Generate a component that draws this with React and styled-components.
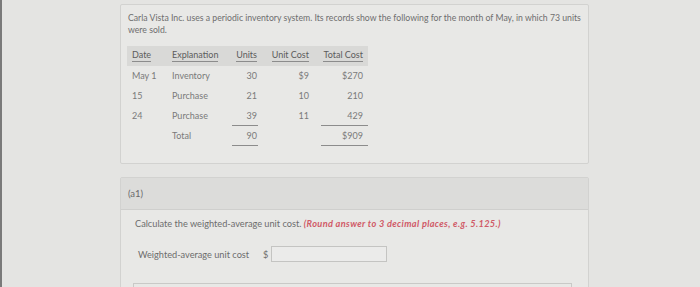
import React from 'react';
import styled, { createGlobalStyle } from 'styled-components';

const GlobalStyle = createGlobalStyle`
  html, body {
    margin: 0;
    padding: 0;
    background: #e4e4e2;
  }
  body {
    font-family: Lato, "Open Sans", "Liberation Sans", sans-serif;
    color: #6f6f6f;
  }
`;

const Page = styled.div`
  height: 287px;
  box-sizing: border-box;
  border-left: 2px solid #7a7a7a;
  padding: 4px 0 0 118px;
  overflow: hidden;
`;

const Card = styled.div`
  width: 469px;
  box-sizing: border-box;
  border: 1px solid #d2d2d0;
  border-radius: 2px;
  background: #e8e8e6;
  margin-bottom: ${p => p.gap || 0}px;
`;

const Intro = styled.p`
  margin: 0;
  padding: 7px 4px 0 7px;
  font-size: 8.7px;
  line-height: 12px;
  color: #6e6e6e;
`;

const Grid = styled.div`
  display: grid;
  grid-template-columns: 45px 59px 28px 53px 56px;
  grid-auto-rows: 20px;
  margin: 10px 0 17px 6px;
  font-size: 9px;
  color: #7a7a7a;
`;

const HeadCell = styled.div`
  background: #d9d9d7;
  color: #5c5c5c;
  display: flex;
  align-items: center;
  justify-content: ${p => (p.right ? 'flex-end' : 'flex-start')};
  padding: 0 ${p => p.pr || 0}px 0 ${p => p.pl || 0}px;
  span {
    border-bottom: 1.5px solid #8c8c8c;
    line-height: 10px;
    padding-bottom: 1px;
  }
`;

const Cell = styled.div`
  display: flex;
  align-items: center;
  justify-content: ${p => (p.right ? 'flex-end' : 'flex-start')};
  padding: 0 ${p => p.pr || 0}px 0 ${p => p.pl || 0}px;
  margin-left: ${p => p.ml || 0}px;
  margin-right: ${p => p.mr || 0}px;
  border-bottom: ${p => (p.rule ? '1.5px solid #8c8c8c' : '1.5px solid transparent')};
`;

const PartHeader = styled.div`
  height: 31px;
  display: flex;
  align-items: center;
  padding-left: 7px;
  background: #dcdcda;
  border-bottom: 1px solid #cfcfcd;
  font-size: 9.5px;
  color: #6a6a6a;
`;

const PartBody = styled.div`
  padding: 8px 16px 0 12px;
  font-size: 9.2px;
  color: #6c6c6c;
`;

const Question = styled.div`
  padding-left: 2px;
  line-height: 12px;
`;

const Note = styled.span`
  color: #d05a66;
  font-weight: bold;
  font-style: italic;
  letter-spacing: 0.35px;
`;

const AnswerRow = styled.div`
  display: flex;
  align-items: center;
  margin-top: 16px;
  padding-left: 5px;
`;

const AnswerLabel = styled.span`
  width: 125px;
`;

const Dollar = styled.span`
  width: 8px;
`;

const Input = styled.div`
  width: 114px;
  height: 14px;
  border: 1px solid #c4c4c2;
  background: #ebebea;
`;

const NextBox = styled.div`
  margin: 21px 0 0 0;
  height: 20px;
  border: 1px solid #c9c9c7;
  border-bottom: none;
`;

const rows = [
  { date: 'May 1', exp: 'Inventory', units: '30', cost: '$9', total: '$270' },
  { date: '15', exp: 'Purchase', units: '21', cost: '10', total: '210' },
  { date: '24', exp: 'Purchase', units: '39', cost: '11', total: '429', rule: true },
  { date: '', exp: 'Total', units: '90', cost: '', total: '$909', rule: true },
];

export default function App() {
  return (
    <>
      <GlobalStyle />
      <Page>
        <Card gap={13}>
          <Intro>
            Carla Vista Inc. uses a periodic inventory system. Its records show the following for the month of May, in which 73 units were sold.
          </Intro>
          <Grid>
            <HeadCell pl={5}><span>Date</span></HeadCell>
            <HeadCell><span>Explanation</span></HeadCell>
            <HeadCell right pr={2}><span>Units</span></HeadCell>
            <HeadCell right pr={3}><span>Unit Cost</span></HeadCell>
            <HeadCell right pr={5}><span>Total Cost</span></HeadCell>
            {rows.map((r, i) => (
              <React.Fragment key={i}>
                <Cell pl={5}>{r.date}</Cell>
                <Cell>{r.exp}</Cell>
                <Cell right pr={1} ml={1} mr={1} rule={r.rule}>{r.units}</Cell>
                <Cell right pr={3}>{r.cost}</Cell>
                <Cell right pr={5} ml={9} rule={r.rule}>{r.total}</Cell>
              </React.Fragment>
            ))}
          </Grid>
        </Card>
        <Card>
          <PartHeader>(a1)</PartHeader>
          <PartBody>
            <Question>
              Calculate the weighted-average unit cost. <Note>(Round answer to 3 decimal places, e.g. 5.125.)</Note>
            </Question>
            <AnswerRow>
              <AnswerLabel>Weighted-average unit cost</AnswerLabel>
              <Dollar>$</Dollar>
              <Input />
            </AnswerRow>
            <NextBox />
          </PartBody>
        </Card>
      </Page>
    </>
  );
}
